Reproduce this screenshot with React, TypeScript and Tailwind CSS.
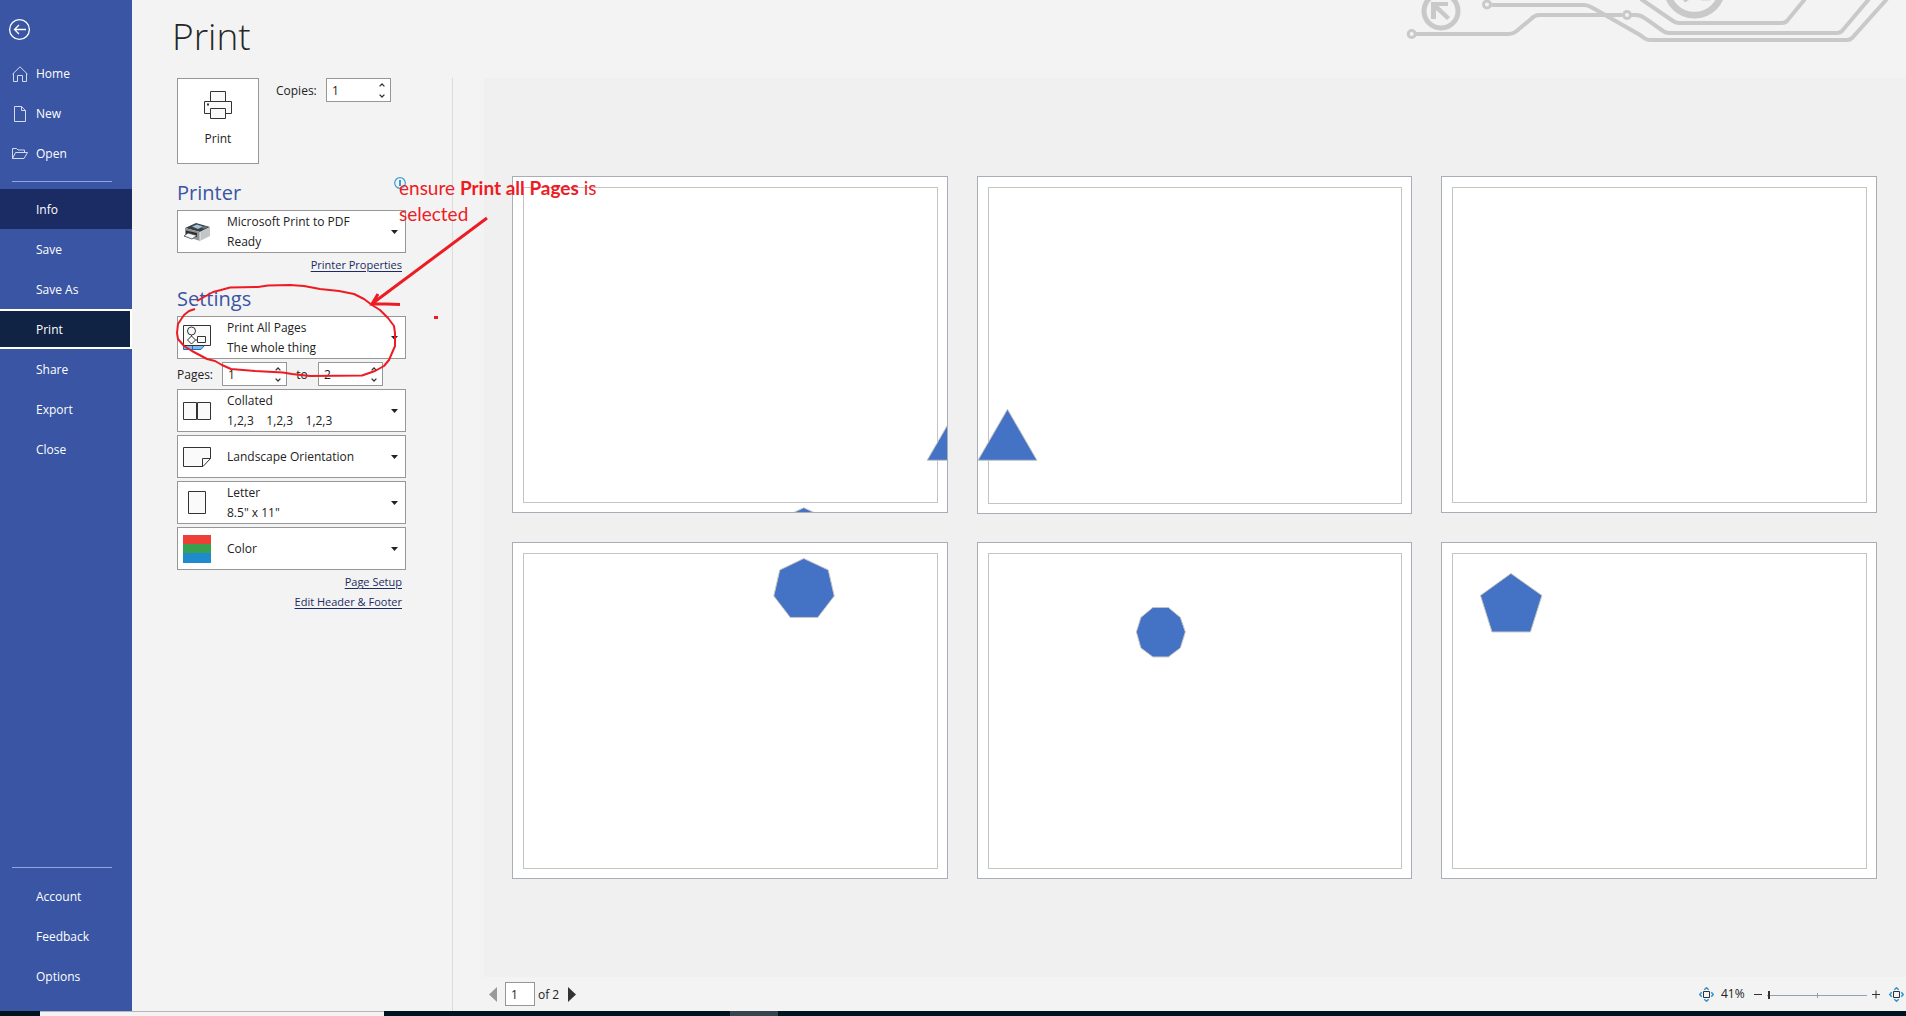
import React from "react";

type NavItem = { label: string; icon?: React.ReactNode; state?: "hover" | "current" };

const HomeIcon = () => (
  <svg width="16" height="16" viewBox="0 0 16 16" fill="none" stroke="#d5dbee" strokeWidth="1">
    <path d="M.5 8.2 8 .8l7.500 7.400M1.500 7.500v8h4v-6h5v6h4v-8" />
  </svg>
);
const NewIcon = () => (
  <svg width="16" height="16" viewBox="0 0 16 16" fill="none" stroke="#d5dbee" strokeWidth="1">
    <path d="M2.500.5h7l4 4v11h-11zM9.500.5v4h4" />
  </svg>
);
const OpenIcon = () => (
  <svg width="16" height="16" viewBox="0 0 16 16" fill="none" stroke="#d5dbee" strokeWidth="1">
    <path d="M.5 12.500v-10h4l1.500 1.500h6.500v3M.5 12.500l3-6h12l-3.500 6z" />
  </svg>
);

const topItems: NavItem[] = [
  { label: "Home", icon: <HomeIcon /> },
  { label: "New", icon: <NewIcon /> },
  { label: "Open", icon: <OpenIcon /> },
];
const midItems: NavItem[] = [
  { label: "Info", state: "hover" },
  { label: "Save" },
  { label: "Save As" },
  { label: "Print", state: "current" },
  { label: "Share" },
  { label: "Export" },
  { label: "Close" },
];
const bottomItems: NavItem[] = [{ label: "Account" }, { label: "Feedback" }, { label: "Options" }];

function NavButton({ item }: { item: NavItem }) {
  const tone =
    item.state === "current"
      ? "bg-[#112344] border-y-2 border-r-2 border-white"
      : item.state === "hover"
        ? "bg-[#1b2b63]"
        : "";
  return (
    <button
      type="button"
      aria-current={item.state === "current" ? "page" : undefined}
      className={`flex h-10 w-full items-center pt-px text-left text-white ${tone}`}
    >
      <span className="flex w-9 pl-3">{item.icon}</span>
      {item.label}
    </button>
  );
}

function Sidebar() {
  return (
    <nav className="flex w-[132px] shrink-0 flex-col bg-[#3955a3] pb-[15px]">
      <button type="button" aria-label="Back" className="mt-[18px] mb-3 ml-2 w-6">
        <svg width="23" height="23" viewBox="0 0 23 23" fill="none" stroke="#fff" strokeWidth="1.300">
          <circle cx="11.500" cy="11.500" r="9.900" />
          <path d="M18 11.500H6.500M11 7l-4.500 4.500L11 16" />
        </svg>
      </button>
      {topItems.map((i) => (
        <NavButton key={i.label} item={i} />
      ))}
      <div className="mt-2 mb-[7px] ml-3 h-px w-[100px] bg-[#8ea6e6]" />
      {midItems.map((i) => (
        <NavButton key={i.label} item={i} />
      ))}
      <div className="mt-auto mb-2 ml-3 h-px w-[100px] bg-[#8ea6e6]" />
      {bottomItems.map((i) => (
        <NavButton key={i.label} item={i} />
      ))}
    </nav>
  );
}

function Spinner({ id, value }: { id: string; value: string }) {
  return (
    <div className="flex h-6 w-[65px] items-center border border-[#979797] bg-white pr-[5px]">
      <input id={id} defaultValue={value} className="w-full min-w-0 flex-1 bg-transparent pt-px pl-[5px] outline-none" />
      <div className="flex flex-col justify-between">
        <button type="button" aria-label="Increase" className="flex h-[11px] items-center">
          <svg width="6" height="4" viewBox="0 0 6 4" fill="none" stroke="#333" strokeWidth="1.300">
            <path d="M.6 3.400 3 1l2.400 2.400" />
          </svg>
        </button>
        <button type="button" aria-label="Decrease" className="flex h-[11px] items-center">
          <svg width="6" height="4" viewBox="0 0 6 4" fill="none" stroke="#333" strokeWidth="1.300">
            <path d="M.6.6 3 3 5.400.6" />
          </svg>
        </button>
      </div>
    </div>
  );
}

function Combo({ label, value, detail, icon }: { label: string; value: string; detail?: string; icon: React.ReactNode }) {
  return (
    <div className="flex h-[43px] items-center border border-[#979797] bg-white pr-[7px] pl-[5px]">
      <span className="flex w-7 shrink-0 justify-center">{icon}</span>
      <div className="ml-4 flex min-w-0 flex-1 flex-col">
        <select aria-label={label} className="h-5 w-full appearance-none bg-transparent outline-none">
          <option>{value}</option>
        </select>
        {detail && <span className="h-5 leading-5 whitespace-pre">{detail}</span>}
      </div>
      <svg width="7" height="4" viewBox="0 0 7 4" fill="#222" className="pointer-events-none shrink-0">
        <path d="M0 0h7L3.500 4z" />
      </svg>
    </div>
  );
}

const PrinterDevice = () => (
  <svg width="28" height="20" viewBox="0 0 28 20">
    <path d="M2 6 13 1l14 4-10 5z" fill="#3c4043" />
    <path d="M9 4.500 14 2.500l6 2-5 2.500z" fill="#9cc3dc" />
    <path d="M18 5.500 22 4l3 1-4 2z" fill="#6d7377" />
    <path d="M2 6l15 4v9L2 14z" fill="#8f9396" />
    <path d="M17 10 27 5v9l-10 5z" fill="#c3c6c8" />
    <path d="M3 8.500 14 11v4L3 12z" fill="#2b2e30" />
    <path d="M5 11l9 2.500-5 3.500-8-3z" fill="#f4f5f6" stroke="#444" strokeWidth=".8" />
    <path d="M17 10v9" stroke="#e9ebec" strokeWidth="1" />
  </svg>
);
const AllPagesIcon = () => (
  <svg width="28" height="26" viewBox="0 0 28 26" fill="none" stroke="#333">
    <path d="M.5 18v6.500h17.500l4-4.500V18z" fill="#83b9ea" stroke="#1a70b8" />
    <path d="M9.500 20v4.500" stroke="#1a70b8" />
    <path d="M.5.5h27v20H.5z" fill="#fafafa" />
    <circle cx="8.500" cy="6" r="4" />
    <path d="M8.500 10v1M8.500 11l4 4-4 4-4-4zM12.500 15h2M14.500 11.500h8v6h-8z" />
  </svg>
);
const CollatedIcon = () => (
  <svg width="28" height="18" viewBox="0 0 28 18" fill="#fafafa" stroke="#333">
    <path d="M.5.5h13v17H.5zM14.500.5h13v17h-13z" />
  </svg>
);
const LandscapeIcon = () => (
  <svg width="28" height="20" viewBox="0 0 28 20" fill="#fafafa" stroke="#333">
    <path d="M.5.5h27v11l-7.500 8H.5zM19.500 19.500v-8h8" />
  </svg>
);
const LetterIcon = () => (
  <svg width="18" height="23" viewBox="0 0 18 23" fill="#fafafa" stroke="#333">
    <path d="M.5.5h17v22H.5z" />
  </svg>
);
const ColorIcon = () => (
  <svg width="28" height="28" viewBox="0 0 28 28">
    <path d="M0 0h28v9H0z" fill="#ee3e38" />
    <path d="M0 9h28v9H0z" fill="#38a150" />
    <path d="M0 18h28v10H0z" fill="#1f8bce" />
  </svg>
);

function SettingsColumn() {
  const link = "h-5 text-[11px] leading-5 text-[#1b2b63] underline underline-offset-2";
  const heading = "text-[20px] leading-7 text-[#3955a3]";
  return (
    <section className="flex w-[321px] shrink-0 flex-col border-r border-[#dcdcdc] pr-[46px] pl-[45px]">
      <div className="flex items-start">
        <button
          type="button"
          className="flex h-[86px] w-[82px] flex-col items-center border border-[#979797] bg-white pt-3"
        >
          <svg width="28" height="28" viewBox="0 0 28 28" fill="#fafafa" stroke="#333">
            <path d="M6.500.5h15v10h-15zM.5 10.500h27v12H.5z" />
            <path d="M6.500 17.500h15v10h-15z" />
            <path d="M3 13.500h2" strokeWidth="2" />
          </svg>
          <span className="mt-[10px] leading-5 font-medium">Print</span>
        </button>
        <label htmlFor="copies" className="ml-[17px] w-[50px] pt-px leading-6">
          Copies:
        </label>
        <Spinner id="copies" value="1" />
      </div>

      <div className="mt-[15px] mb-[3px] flex justify-between">
        <h2 className={heading}>Printer</h2>
        <svg width="12" height="12" viewBox="0 0 12 12" fill="none" stroke="#3a9bd4" strokeWidth="1.200" className="-mt-[2px]">
          <circle cx="6" cy="6" r="5.300" />
          <path d="M6 3v6" strokeWidth="2" />
        </svg>
      </div>
      <Combo label="Printer" value="Microsoft Print to PDF" detail="Ready" icon={<PrinterDevice />} />
      <div className="mt-[2px] flex justify-end pr-1">
        <a href="#printer-properties" className={link}>
          Printer Properties
        </a>
      </div>

      <h2 className={`mt-[10px] mb-[3px] ${heading}`}>Settings</h2>
      <div className="flex flex-col gap-[3px]">
        <Combo label="Pages to print" value="Print All Pages" detail="The whole thing" icon={<AllPagesIcon />} />
        <div className="flex items-center">
          <label htmlFor="from" className="w-[45px] pt-[2px]">
            Pages:
          </label>
          <Spinner id="from" value="1" />
          <label htmlFor="to" className="w-[31px] pt-[2px] pr-px text-center">
            to
          </label>
          <Spinner id="to" value="2" />
        </div>
        <Combo label="Collation" value="Collated" detail={"1,2,3    1,2,3    1,2,3"} icon={<CollatedIcon />} />
        <Combo label="Orientation" value="Landscape Orientation" icon={<LandscapeIcon />} />
        <Combo label="Paper size" value="Letter" detail={'8.5" x 11"'} icon={<LetterIcon />} />
        <Combo label="Color mode" value="Color" icon={<ColorIcon />} />
      </div>
      <div className="mt-[2px] flex flex-col items-end pr-1">
        <a href="#page-setup" className={link}>
          Page Setup
        </a>
        <a href="#header-footer" className={link}>
          Edit Header &amp; Footer
        </a>
      </div>
    </section>
  );
}

const heptagon = "292,16.500 316.500,28 322.500,54 306,75.500 278.500,75.500 262,54 268,28";
const sheets: { id: string; shapes: string[] }[] = [
  {
    id: "1",
    shapes: [
      "415.500,284.500 445,233.500 474.500,284.500",
      "292,332 316.500,343.500 322.500,369.500 306,391 278.500,391 262,369.500 268,343.500",
    ],
  },
  { id: "2", shapes: ["30.500,233.500 60,284.500 1,284.500"] },
  { id: "3", shapes: [] },
  { id: "4", shapes: [heptagon] },
  { id: "5", shapes: ["176,65.500 191.500,65.500 203.500,75.500 208.500,90 203.500,106 191.500,115 176,115 164,106 159.500,90 164,75.500"] },
  { id: "6", shapes: ["70,31.500 101,53.500 89.500,90 51,90 39.500,53.500"] },
];

function Preview() {
  return (
    <section className="ml-[31px] flex min-w-0 flex-1 flex-col">
      <div className="flex flex-1 items-center bg-[#f0f0f0] pr-[29px] pl-7">
        <div className="grid w-full grid-cols-3 gap-x-[29px] gap-y-7">
          {sheets.map((s) => (
            <div key={s.id} className="relative aspect-[436/338] border border-[#a9adb5] bg-white p-[10px] pr-[9px] pb-[9px]">
              <div className="h-full border border-[#c4c4c4]" />
              <svg className="absolute inset-0 h-full w-full" viewBox="1 1 434 336" fill="#4472c4" stroke="#c4c4c4" strokeWidth="1">
                {s.shapes.map((p) => (
                  <polygon key={p} points={p} />
                ))}
              </svg>
            </div>
          ))}
        </div>
      </div>
      <div className="flex h-[34px] items-center">
        <div className="flex flex-1 items-center pl-[5px]">
          <button type="button" aria-label="Previous page">
            <svg width="8" height="15" viewBox="0 0 8 15" fill="#999">
              <path d="M8 0v15L0 7.500z" />
            </svg>
          </button>
          <input
            aria-label="Page number"
            defaultValue="1"
            className="ml-2 h-6 w-[30px] border border-[#979797] bg-white pt-px pl-[5px] outline-none"
          />
          <span className="ml-[3px] w-[30px] pt-px">of 2</span>
          <button type="button" aria-label="Next page">
            <svg width="8" height="15" viewBox="0 0 8 15" fill="#333">
              <path d="M0 0v15l8-7.500z" />
            </svg>
          </button>
        </div>
        <button type="button" aria-label="Zoom to page">
          <FitIcon />
        </button>
        <span className="ml-[7px] w-[33px]">41%</span>
        <button type="button" aria-label="Zoom out">
          <svg width="9" height="9" viewBox="0 0 9 9" stroke="#333">
            <path d="M0 4.500h8" />
          </svg>
        </button>
        <div className="relative ml-1 flex h-4 w-[100px] items-center">
          <input type="range" aria-label="Zoom" defaultValue="0" className="absolute inset-0 m-0 w-full opacity-0" />
          <svg width="100" height="9" viewBox="0 0 100 9" stroke="#92a1ad" className="pointer-events-none">
            <path d="M0 5.500h100M50.500 3v5" />
            <path d="M2 1v8" stroke="#333" strokeWidth="2" />
          </svg>
        </div>
        <button type="button" aria-label="Zoom in" className="ml-[5px]">
          <svg width="9" height="9" viewBox="0 0 9 9" stroke="#333">
            <path d="M0 4.500h8M4 .5v8" />
          </svg>
        </button>
        <button type="button" aria-label="Fit to window" className="mr-[2px] ml-2">
          <FitIcon />
        </button>
      </div>
    </section>
  );
}

const FitIcon = () => (
  <svg width="15" height="15" viewBox="0 0 15 15" fill="none">
    <path d="M4.500 4.500h6v6h-6z" stroke="#333" />
    <path d="M5.300 2.700 7.500.8l2.200 1.900M5.300 12.300l2.200 1.900 2.200-1.900M2.700 5.300.8 7.500l1.900 2.200M12.300 5.300l1.900 2.200-1.900 2.200" stroke="#2d93d6" strokeWidth="1.500" />
  </svg>
);

const Circuit = () => (
  <svg width="516" height="44" viewBox="0 0 516 44" fill="none" stroke="#c9c9c9" strokeWidth="4" className="absolute top-0 right-0">
    <circle cx="51" cy="11" r="17" strokeWidth="5" />
    <path d="M41 19V2h17v4h-9.500L60 17l-3 3L46 10v9z" fill="#c9c9c9" stroke="none" />
    <circle cx="21.700" cy="34" r="3.500" strokeWidth="3" />
    <path d="M26 34h93q4 0 7-2.500l15-12.500q4-4 8-4h83M241 15h5q5 0 10 4l17 12q3 2 6 2h168q3 0 5-2L479-1" />
    <circle cx="237" cy="15" r="3.500" strokeWidth="3" />
    <circle cx="97" cy="4.500" r="3.500" strokeWidth="3" />
    <path d="M101.500 5H194q4 0 8 2.500L250 35l5 3.500q2 1.500 5 1.500h197q3 0 5-2L497-1" />
    <path d="M251-1l32 22q3 2 6 2h103q3 0 5-2l18-22" />
    <circle cx="304.500" cy="-12.500" r="27.700" strokeWidth="6.700" />
    <path d="M293 0h6l-4 2.500z" fill="#c9c9c9" stroke="none" />
    <path d="M311 0h9v1h-9z" fill="#e2e2e2" stroke="none" />
  </svg>
);

function Annotations() {
  return (
    <>
      <svg width="620" height="420" viewBox="0 0 620 420" fill="none" stroke="#ed1c24" className="pointer-events-none absolute top-0 left-0">
        <path
          strokeWidth="2"
          strokeLinejoin="round"
          d="M197 301 204 297 213 292 221 290 230 287.500 258 287 268 285.500 290 285 304 286 320 289 339 291 354 294 364 299 372 305 380 310 388 318 394 326 395 333 395 346 392 353 389 360 384 366 375 371 362 375.500 310 376 292 374 283 372.500 255 371 231 369 222 365 215 361 207 359 192 351 184 346 178 339 177 333 178 324 184 315 189 311 195 309"
        />
        <path strokeWidth="3" d="M487 218 373 303M378 294 372 304 386 304 400 304.500" />
        <path fill="#ed1c24" stroke="none" d="M434 316h4v3h-4z" />
      </svg>
      <p className="pointer-events-none absolute top-[175px] left-[399px] w-[210px] font-['Lato',sans-serif] text-[19px] leading-[26px] text-[#ed1c24]">
        ensure <strong>Print all Pages</strong> is selected
      </p>
    </>
  );
}

export default function App() {
  return (
    <div className="relative flex min-h-screen flex-col overflow-hidden bg-[#f3f3f3] font-['Open_Sans',sans-serif] text-[12px] text-[#222]">
      <div className="flex flex-1">
        <Sidebar />
        <main className="relative flex min-w-0 flex-1 flex-col">
          <Circuit />
          <h1 className="mb-[14px] pt-2 pl-10 text-[37px] leading-[56px] font-light text-[#262626]">Print</h1>
          <div className="flex flex-1">
            <SettingsColumn />
            <Preview />
          </div>
        </main>
      </div>
      <div className="flex h-[5px] bg-[#00141f]">
        <div className="ml-10 w-[344px] border-t border-[#b5b5b5] bg-[#f3f3f3]" />
        <div className="ml-[346px] w-12 bg-[#36444f]" />
      </div>
      <Annotations />
    </div>
  );
}
